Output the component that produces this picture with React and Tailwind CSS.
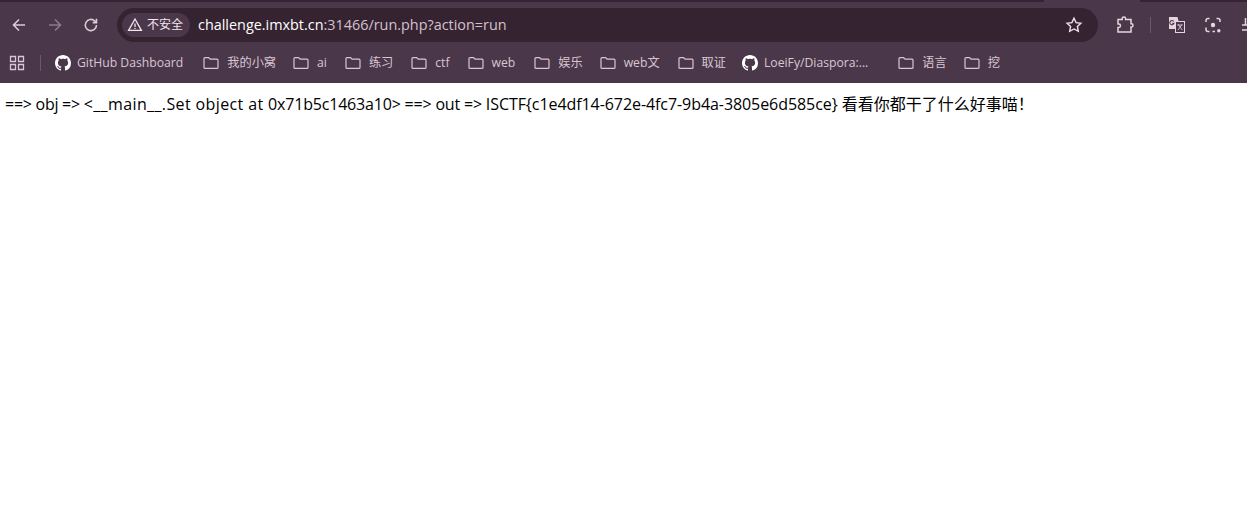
import React from "react";

const Folder = () => (
  <svg width="16" height="16" viewBox="0 0 16 16" fill="none" stroke="#d9c6d2" strokeWidth="1.2" className="shrink-0">
    <path d="M1 3.600c0-.6.4-1 1-1h3.600l1.500 1.600H14c.6 0 1 .4 1 1v7.200c0 .6-.4 1-1 1H2c-.6 0-1-.4-1-1z" />
  </svg>
);

const Github = () => (
  <svg width="16" height="16" viewBox="0 0 16 16" fill="#ffffff" className="shrink-0">
    <path d="M8 0C3.58 0 0 3.58 0 8c0 3.54 2.29 6.53 5.47 7.59.4.07.55-.17.55-.38 0-.19-.01-.82-.01-1.49-2.01.37-2.53-.49-2.69-.94-.09-.23-.48-.94-.82-1.13-.28-.15-.68-.52-.01-.53.63-.01 1.08.58 1.23.82.72 1.21 1.87.87 2.33.66.07-.52.28-.87.51-1.07-1.78-.2-3.64-.89-3.64-3.95 0-.87.31-1.59.82-2.15-.08-.2-.36-1.02.08-2.12 0 0 .67-.21 2.2.82.64-.18 1.32-.27 2-.27s1.36.09 2 .27c1.53-1.04 2.2-.82 2.2-.82.44 1.1.16 1.92.08 2.12.51.56.82 1.27.82 2.15 0 3.07-1.87 3.75-3.65 3.95.29.25.54.73.54 1.48 0 1.07-.01 1.93-.01 2.2 0 .21.15.46.55.38A8.01 8.01 0 0 0 16 8c0-4.420-3.58-8-8-8z" />
  </svg>
);

const Bookmark = ({ icon, label, className }) => (
  <div className={`flex items-center h-7 shrink-0 ${icon === "gh" ? "gap-[6px]" : "gap-2"} ${className}`}>
    {icon === "gh" ? <Github /> : <Folder />}
    <span className="text-[12.2px] leading-none text-[#d9c6d2] whitespace-nowrap">{label}</span>
  </div>
);

export default function App() {
  return (
    <div className="min-h-[516px] bg-white overflow-hidden font-['Open_Sans','Noto_Sans_CJK_SC',sans-serif]">
      <header className="h-[83px] bg-[#4b374a] flex flex-col overflow-hidden">
        <div className="h-[2px] flex justify-between">
          <div className="w-[1044px] bg-[#352331]" />
          <div className="w-[107px] bg-[#352331]" />
        </div>
        <div className="flex items-center h-[40px] mt-[3px] pl-[8px]">
          <div className="flex items-center w-[100px] shrink-0">
            <svg width="20" height="20" viewBox="0 0 20 20" fill="none" stroke="#dcc9d5" strokeWidth="1.6" className="ml-[1px]">
              <path d="M16 10H4.500M10 4.500 4.500 10l5.500 5.500" />
            </svg>
            <svg width="20" height="20" viewBox="0 0 20 20" fill="none" stroke="#8d7a8a" strokeWidth="1.6" className="ml-[16px]">
              <path d="M4 10h11.500M10 4.500l5.500 5.500-5.500 5.500" />
            </svg>
            <svg width="20" height="20" viewBox="0 0 20 20" fill="none" stroke="#dcc9d5" strokeWidth="1.6" className="ml-[16px]">
              <path d="M15.500 10a5.600 5.600 0 1 1-1.700-4L15.500 7.600M15.500 3.800v3.800h-3.800" />
            </svg>
          </div>
          <div className="flex items-center h-[34px] w-[981px] ml-[9px] rounded-full bg-[#352331] pl-[5px] pr-[15px] shrink-0">
            <div className="flex items-center gap-[4px] h-[24px] pl-[5px] pr-[7px] rounded-full bg-[#4b374a]">
              <svg width="16" height="16" viewBox="0 0 16 16" fill="none" stroke="#f3e6ee" strokeWidth="1.3">
                <path d="M8 2 1.600 13.400h12.800zM8 6.500v3.600M8 11v1" />
              </svg>
              <span className="text-[12px] leading-none text-[#f3e6ee]">不安全</span>
            </div>
            <div className="ml-[8px] text-[14.4px] text-[#d3c1cd] whitespace-nowrap">
              <span className="text-white">challenge.imxbt.cn</span>:31466/run.php?action=run
            </div>
            <svg width="18" height="18" viewBox="0 0 18 18" fill="none" stroke="#f0e2ea" strokeWidth="1.4" className="ml-auto">
              <path d="m9 2.200 2.100 4.400 4.800.6-3.500 3.300.9 4.800L9 13l-4.300 2.300.9-4.800-3.500-3.300 4.800-.6z" />
            </svg>
          </div>
          <svg width="20" height="20" viewBox="0 0 20 20" fill="none" stroke="#e6d5df" strokeWidth="1.5" className="ml-[17px] shrink-0">
            <path d="M3 4.500h4.200V3.600a1.700 1.700 0 0 1 3.400 0v.9H16v4.200h.3a1.700 1.700 0 0 1 0 3.400H16v5H3v-4.600h.8a1.700 1.700 0 0 0 0-3.400H3z" />
          </svg>
          <div className="w-px h-[16px] bg-[#6d5869] ml-[15px] shrink-0" />
          <svg width="16" height="16" viewBox="0 0 16 16" className="ml-[18px] shrink-0">
            <path d="M0 0h8.500l1 4H6v8H0z" fill="#e6d5df" />
            <rect x="6.500" y="4.500" width="9" height="11" fill="#4b374a" stroke="#e6d5df" strokeWidth="1" />
            <path d="M4.600 4.300A2.100 2.100 0 1 0 5 6.200H3.200" fill="none" stroke="#4b374a" strokeWidth="1.100" />
            <path d="m8.800 7 4.500 6M8.500 8h5M13 7.500l-4 5.500" stroke="#e6d5df" strokeWidth="0.8" fill="none" />
          </svg>
          <svg width="20" height="20" viewBox="0 0 20 20" fill="none" stroke="#e6d5df" strokeWidth="1.5" className="ml-[18px] shrink-0">
            <path d="M6.500 3.500H5a2 2 0 0 0-2 2v1.500M13.500 3.500H15a2 2 0 0 1 2 2v1.500M3 12.500v2a2 2 0 0 0 2 2h1.500M9.500 16.500h2.500" />
            <circle cx="10" cy="10" r="2.200" fill="#e6d5df" stroke="none" />
            <circle cx="15.800" cy="15.800" r="1.700" fill="#e6d5df" stroke="none" />
          </svg>
          <svg width="20" height="20" viewBox="0 0 20 20" fill="none" stroke="#e6d5df" strokeWidth="1.5" className="ml-[18px] shrink-0">
            <path d="M1 10h8M4.500 3v7M1 15h8" />
          </svg>
        </div>
        <div className="flex items-center h-[28px] mt-[4px] pl-[9px]">
          <svg width="16" height="16" viewBox="0 0 16 16" fill="none" stroke="#d9c6d2" strokeWidth="1.3" className="shrink-0">
            <path d="M1.500 1.500h5v5h-5zM9.500 1.500h5v5h-5zM1.500 9.500h5v5h-5zM9.500 9.500h5v5h-5z" />
          </svg>
          <div className="w-px h-[16px] bg-[#6d5869] ml-[15px] mr-[14px] shrink-0" />
          <Bookmark icon="gh" label="GitHub Dashboard" />
          <Bookmark label="我的小窝" className="ml-[20px]" />
          <Bookmark label="ai" className="ml-[17px]" />
          <Bookmark label="练习" className="ml-[18px]" />
          <Bookmark label="ctf" className="ml-[18px]" />
          <Bookmark label="web" className="ml-[18px]" />
          <Bookmark label="娱乐" className="ml-[19px]" />
          <Bookmark label="web文" className="ml-[17px]" />
          <Bookmark label="取证" className="ml-[18px]" />
          <Bookmark icon="gh" label="LoeiFy/Diaspora:..." className="ml-[16px]" />
          <Bookmark label="语言" className="ml-[30px]" />
          <Bookmark label="挖" className="ml-[17px]" />
        </div>
      </header>
      <main className="pl-[5px] pt-[12px] text-[16px] leading-[18px] text-black whitespace-nowrap">
        <span className="tracking-[-0.27px]">{"==> obj => "}</span>
        <span className="tracking-[0.38px]">{"<__main__.Set object at "}</span>
        <span className="tracking-[-0.19px]">{"0x71b5c1463a10> ==> out => "}</span>
        <span className="tracking-[-0.07px]">{"ISCTF{c1e4df14-672e-4fc7-9b4a-3805e6d585ce} "}</span>
        看看你都干了什么好事喵！
      </main>
    </div>
  );
}
